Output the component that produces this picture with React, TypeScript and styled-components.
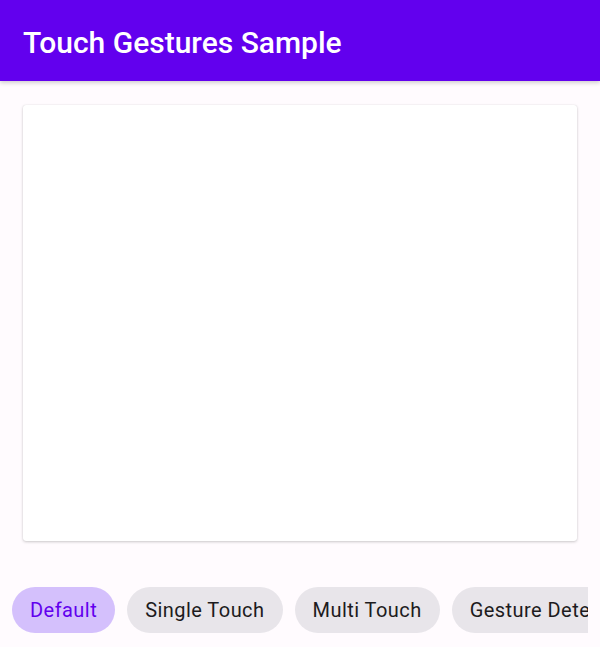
import React, { useState } from "react";
import styled, { createGlobalStyle } from "styled-components";

const Global = createGlobalStyle`
  html, body { margin: 0; padding: 0; background: #fffbfe; }
  body { font-family: Roboto, "Noto Sans", sans-serif; }
`;

const Screen = styled.div`
  width: 600px;
  height: 647px;
  display: flex;
  flex-direction: column;
  background: #fffbfe;
  overflow: hidden;
`;

const TopBar = styled.header`
  height: 81px;
  flex-shrink: 0;
  background: #6200ee;
  display: flex;
  align-items: center;
  padding: 0 23px;
  box-shadow: 0 2px 4px rgba(0, 0, 0, 0.18);
  position: relative;
  z-index: 1;
`;

const Title = styled.h1`
  margin: 0;
  color: #ffffff;
  font-family: Roboto, sans-serif;
  font-weight: 500;
  font-size: 30px;
  letter-spacing: 0;
  padding-top: 3px;
`;

const Content = styled.main`
  padding: 24px 23px 0 23px;
`;

const Canvas = styled.div`
  height: 436px;
  background: #ffffff;
  border-radius: 3px;
  box-shadow: 0 1px 3px rgba(0, 0, 0, 0.2), 0 0 1px rgba(0, 0, 0, 0.12);
`;

const ChipScroller = styled.div`
  margin: 46px 12px 0 12px;
  display: flex;
  gap: 12px;
  overflow: hidden;
`;

const Chip = styled.button<{ $selected: boolean }>`
  flex-shrink: 0;
  height: 46px;
  padding: 0 18px;
  border: none;
  border-radius: 23px;
  background: ${(p) => (p.$selected ? "#d4c0fc" : "#e8e5ea")};
  color: ${(p) => (p.$selected ? "#6200ee" : "#1d1b20")};
  font-family: Roboto, sans-serif;
  font-size: 20px;
  font-weight: 400;
  letter-spacing: 0.45px;
  white-space: nowrap;
  cursor: pointer;
`;

const tabs = ["Default", "Single Touch", "Multi Touch", "Gesture Detector"];

export default function App() {
  const [sel, setSel] = useState(0);
  return (
    <>
      <Global />
      <Screen>
        <TopBar>
          <Title>Touch Gestures Sample</Title>
        </TopBar>
        <Content>
          <Canvas />
        </Content>
        <ChipScroller>
          {tabs.map((t, i) => (
            <Chip key={t} $selected={i === sel} onClick={() => setSel(i)}>
              {t}
            </Chip>
          ))}
        </ChipScroller>
      </Screen>
    </>
  );
}
